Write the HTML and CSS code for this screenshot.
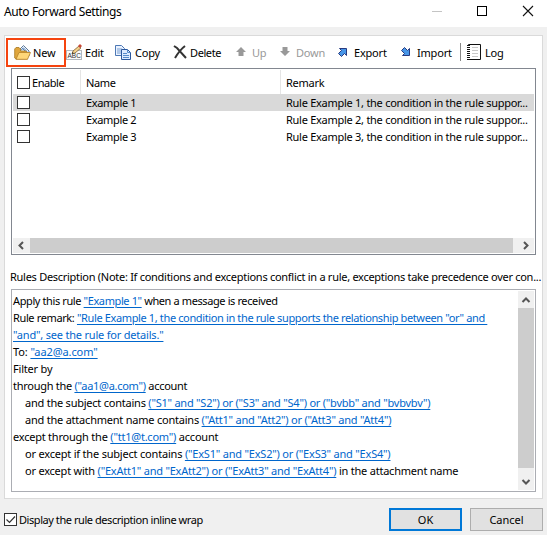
FILE: index.html
```html
<!DOCTYPE html>
<html lang="en">
<head>
<meta charset="utf-8">
<title>Auto Forward Settings</title>
<link rel="stylesheet" href="styles.css">
</head>
<body>
<div class="window">
  <header class="titlebar">
    <h1>Auto Forward Settings</h1>
    <svg class="controls" width="104" height="14" viewBox="0 0 104 14">
      <path d="M0 6.500h10" stroke="#c4c4c4"/>
      <rect x="45.500" y="1.500" width="9" height="9" fill="none" stroke="#000"/>
      <path d="M91 1l10 10M101 1L91 11" stroke="#111" stroke-width="1.1"/>
    </svg>
  </header>
  <main class="panel">
    <nav class="toolbar">
      <div class="tool new">
        <svg width="17" height="17" viewBox="0 0 17 17">
          <path d="M4 7L9.500 1.500 15 7v5H4z" fill="#e8f2fb" stroke="#5f7899"/>
          <path d="M6.500 6.500l3-2.500 3.500 3.500M8 4l4 4" stroke="#5f86b8" fill="none"/>
          <path d="M.7 5l1.300-1.500h3L6.500 5v2H12l1.500 1.500V15H2L.7 14z" fill="#e0a63c" stroke="#a87820" stroke-width=".8"/>
          <path d="M2 15.300L5 8.500h11.500L13.500 15.300z" fill="#ffd778" stroke="#b58128" stroke-width=".8"/>
        </svg><span>New</span>
      </div>
      <div class="tool edit">
        <svg width="17" height="17" viewBox="0 0 17 17">
          <rect x=".5" y="6.500" width="15" height="9" fill="#fafafa" stroke="#b4b8be"/>
          <text x="1.500" y="14" class="abc">ABC</text>
          <path d="M6 10l1-3 6-5 2 2-6 5z" fill="#f4d08a" stroke="#806132" stroke-width=".8"/>
          <path d="M12 2l2-2 2 2-2 2z" fill="#c94936"/>
          <path d="M6 10l.4-2 1.500 1.300z" fill="#333"/>
        </svg><span>Edit</span>
      </div>
      <div class="tool copy">
        <svg width="17" height="17" viewBox="0 0 17 17">
          <path d="M.5 1.500h6l3 3v7h-9z" fill="#eaf2ff" stroke="#4d78b4"/>
          <path d="M2 5h5M2 7h5M2 9h5" stroke="#789ed0"/>
          <path d="M6.500 5.500h6l3 3v7h-9z" fill="#dceaff" stroke="#2b579c"/>
          <path d="M12.500 5.500v3h3M8 9.500h4M8 11.500h6M8 13.500h6" fill="none" stroke="#568aca"/>
        </svg><span>Copy</span>
      </div>
      <div class="tool delete">
        <svg width="14" height="14" viewBox="0 0 14 14"><path d="M1 1l3 2 9 10M12 1C8 4 5 8 2 13" fill="none" stroke="#333" stroke-width="2"/></svg><span>Delete</span>
      </div>
      <div class="tool up disabled">
        <svg width="10" height="10" viewBox="0 0 10 10"><path d="M5 0l5 5H7.500v4h-5V5H0z" fill="#999"/></svg><span>Up</span>
      </div>
      <div class="tool down disabled">
        <svg width="10" height="10" viewBox="0 0 10 10"><path d="M5 9L0 4h2.500V0h5v4H10z" fill="#999"/></svg><span>Down</span>
      </div>
      <div class="tool export">
        <svg width="10" height="10" viewBox="0 0 10 10"><path d="M1.500 1.500h7v7L6.500 6.500 3.500 9.500.5 6.500l3-3z" fill="#4796e8" stroke="#293b80"/></svg><span>Export</span>
      </div>
      <div class="tool import">
        <svg width="10" height="10" viewBox="0 0 10 10"><path d="M8.500 1.500v7h-7l2-2-3-3 3-3 3 3z" fill="#4796e8" stroke="#293b80"/></svg><span>Import</span>
      </div>
      <div class="tool log">
        <i class="divider"></i>
        <svg width="14" height="16" viewBox="0 0 14 16">
          <path d="M1.500.5h12v15h-12z" fill="#fff" stroke="#111"/>
          <path d="M1.500 1v14" stroke="#fff"/><path d="M1.500 1v15" stroke="#111" stroke-width="3" stroke-dasharray="1 1"/>
          <path d="M5 3.500h6M5 6.500h6M5 9.500h6M5 12.500h6" stroke="#c9c9c9"/>
        </svg><span>Log</span>
      </div>
    </nav>
    <section class="list">
      <div class="row head"><div class="cell"><i class="box"></i><span class="enable">Enable</span></div><div class="cell name">Name</div><div class="cell remark">Remark</div></div>
      <div class="row selected"><div class="cell"><i class="box"></i></div><div class="cell name">Example 1</div><div class="cell remark">Rule Example 1, the condition in the rule suppor...</div></div>
      <div class="row"><div class="cell"><i class="box"></i></div><div class="cell name">Example 2</div><div class="cell remark">Rule Example 2, the condition in the rule suppor...</div></div>
      <div class="row"><div class="cell"><i class="box"></i></div><div class="cell name">Example 3</div><div class="cell remark">Rule Example 3, the condition in the rule suppor...</div></div>
      <div class="hscroll">
        <svg width="17" height="15" viewBox="0 0 17 15"><path d="M10 4L6.500 7.500 10 11" fill="none" stroke="#555" stroke-width="2"/></svg>
        <i class="thumb"></i>
        <svg width="21" height="15" viewBox="0 0 21 15"><path d="M11 4l3.500 3.500L11 11" fill="none" stroke="#555" stroke-width="2"/></svg>
      </div>
    </section>
    <p class="caption">Rules Description (Note: If conditions and exceptions conflict in a rule, exceptions take precedence over con...</p>
    <section class="description">
      <div class="rules">
        <p class="l1">Apply this rule <a>"Example 1"</a> when a message is received</p>
        <p class="l2">Rule remark: <a>"Rule Example 1, the condition in the rule supports the relationship between "or" and&nbsp;</a></p>
        <p class="l3"><a>"and", see the rule for details."</a></p>
        <p class="l4">To: <a>"aa2@a.com"</a></p>
        <p class="l5">Filter by</p>
        <p class="l6">through the <a>("aa1@a.com")</a> account</p>
        <p class="l7 indent">and the subject contains <a>("S1" and "S2") or ("S3" and "S4") or ("bvbb" and "bvbvbv")</a></p>
        <p class="l8 indent">and the attachment name contains <a>("Att1" and "Att2") or ("Att3" and "Att4")</a></p>
        <p class="l9">except through the <a>("tt1@t.com")</a> account</p>
        <p class="l10 indent">or except if the subject contains <a>("ExS1" and "ExS2") or ("ExS3" and "ExS4")</a></p>
        <p class="l11 indent">or except with <a>("ExAtt1" and "ExAtt2") or ("ExAtt3" and "ExAtt4")</a> in the attachment name</p>
      </div>
      <div class="vscroll">
        <svg width="16" height="17" viewBox="0 0 16 17"><path d="M4.500 11L8 7.500l3.500 3.500" fill="none" stroke="#555" stroke-width="2"/></svg>
        <i class="thumb"></i>
        <svg width="16" height="22" viewBox="0 0 16 22"><path d="M4.500 12L8 15.500l3.500-3.500" fill="none" stroke="#555" stroke-width="2"/></svg>
      </div>
    </section>
  </main>
  <footer class="footer">
    <label class="wrap"><svg width="13" height="13" viewBox="0 0 13 13"><rect x=".5" y=".5" width="12" height="12" fill="#fff" stroke="#333"/><path d="M2.500 6.500l3 3 5.500-6" fill="none" stroke="#333" stroke-width="1.200"/></svg><span>Display the rule description inline wrap</span></label>
    <button class="ok">OK</button>
    <button>Cancel</button>
  </footer>
</div>
</body>
</html>
```
FILE: styles.css
```css
* { box-sizing: border-box; }
body { margin: 0; font: 11px/17px "Noto Sans", sans-serif; color: #000; }
h1, p { margin: 0; font-weight: 400; white-space: pre; }
svg { display: block; flex: none; }
.window { width: 547px; height: 535px; background: #f0f0f0; overflow: hidden; }
.titlebar { height: 27px; background: #fff; display: flex; justify-content: space-between; padding: 3px 11px 0 4px; }
h1 { font-size: 12px; line-height: 18px; letter-spacing: -.38px; }
.controls { margin-top: 2px; }
.panel { margin: 8px 4px 0; height: 464px; background: #fff; border: 1px solid #dadada; padding: 2px 6px 0; }
.toolbar { display: grid; grid-template-columns: 60px 49px 58px 63px 44px 58px 63px 59px 70px; height: 30px; margin-left: -5px; letter-spacing: -.2px; }
.tool { display: flex; align-items: center; white-space: nowrap; height: 28px; }
.new { border: 2px solid #f5440f; padding: 0 0 1px 6px; gap: 2px; height: 29px; }
.edit { gap: 2px; }
.copy { gap: 3px; }
.delete { gap: 3px; letter-spacing: -.4px; }
.up, .down, .export, .import { gap: 6px; }
.disabled { color: #999; }
.log { gap: 4px; }
.divider { width: 1px; height: 18px; background: #888; margin-right: 2px; }
.abc { font: 6.5px "Liberation Sans", sans-serif; fill: #333; letter-spacing: 0; }
.list { height: 187px; border: 1px solid #828790; padding: 1px; display: flex; flex-direction: column; letter-spacing: -.35px; }
.row { display: grid; grid-template-columns: 67px 200px 1fr; height: 17px; white-space: nowrap; flex: none; }
.row.head { height: 24px; line-height: 26px; }
.cell { display: flex; padding-left: 4px; align-items: center; }
.name, .remark { padding-left: 6px; }
.remark { letter-spacing: -.27px; }
.head .name, .head .remark { border-left: 1px solid #e5e5e5; padding-left: 5px; }
.selected { background: #d9d9d9; }
.box { width: 13px; height: 13px; border: 1px solid #333; background: #fff; }
.head .box { margin-top: -1px; }
.enable { margin-left: 2px; letter-spacing: -.45px; }
.hscroll { margin-top: auto; height: 15px; display: flex; background: #f0f0f0; }
.hscroll .thumb, .vscroll .thumb { flex: 1; background: #cdcdcd; }
.caption { margin: 13px -6px 4px -1px; height: 17px; letter-spacing: -.28px; }
.description { height: 203px; border: 1px solid #abadb3; padding: 1px; display: flex; justify-content: space-between; }
.rules { padding: 1px 0 0; width: 490px; }
.indent { padding-left: 12px; }
.rules a { color: #0066cc; text-decoration: underline; text-underline-offset: 2px; text-decoration-thickness: 1px; }
.l1 { letter-spacing: -.39px; }
.l2 { letter-spacing: -.37px; }
.l3 { letter-spacing: -.2px; }
.l4 { letter-spacing: -.1px; }
.l5 { letter-spacing: -.2px; }
.l6 { letter-spacing: -.28px; }
.l7 { letter-spacing: -.23px; }
.l8 { letter-spacing: -.22px; }
.l9 { letter-spacing: -.22px; }
.l10 { letter-spacing: -.2px; }
.l11 { letter-spacing: -.22px; }
.vscroll { width: 16px; display: flex; flex-direction: column; background: #f0f0f0; }
.footer { display: flex; padding: 9px 4px 0; gap: 8px; }
.wrap { display: flex; align-items: center; gap: 2px; height: 23px; margin-right: auto; white-space: nowrap; letter-spacing: -.44px; }
button { width: 73px; height: 23px; border: 1px solid #adadad; background: #e1e1e1; font: inherit; padding: 0; line-height: 19px; }
.ok { border: 2px solid #0078d7; }
```
